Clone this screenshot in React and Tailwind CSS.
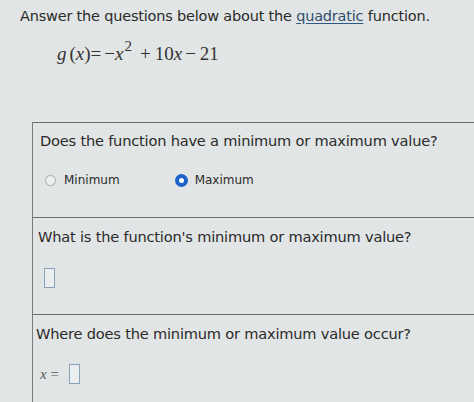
export default function App() {
  const sans = { fontFamily: '"DejaVu Sans", Verdana, sans-serif' };
  const serif = { fontFamily: '"Liberation Serif", "Times New Roman", serif' };
  return (
    <div className="w-[474px] h-[402px] overflow-hidden bg-[#e2e5e5] text-[#2a2a2a]" style={sans}>
      <div className="pt-[6px] pl-[20px] text-[14.5px] tracking-[-0.2px]">
        Answer the questions below about the <span className="underline decoration-[#2f5a85] underline-offset-2 text-[#2f4d6b]">quadratic</span> function.
      </div>
      <div className="pl-[57px] pt-[12px] text-[19px] text-[#333] flex items-baseline" style={serif}>
        <i>g</i>
        <span className="ml-[3px]">(</span><i>x</i><span>)</span>
        <span>=</span>
        <span className="ml-[3px]">−</span><i>x</i>
        <span className="relative -top-[9px] text-[15px] ml-[1px]">2</span>
        <span className="ml-[8px]">+</span>
        <span className="ml-[4px]">10</span><i>x</i>
        <span className="ml-[3px]">−</span>
        <span className="ml-[4px]">21</span>
      </div>
      <div className="ml-[32px] mt-[54px] border-l border-[#7a7c7c]">
        <div className="border-t border-[#6e7070] h-[95px] pl-[7px] pt-[7px]">
          <div className="text-[14.6px] tracking-[-0.2px]">Does the function have a minimum or maximum value?</div>
          <div className="flex items-center mt-[19px] text-[12px]">
            <div className="ml-[5px] w-[11px] h-[11px] rounded-full border border-[#a9abab] bg-[#eef0f0]" />
            <span className="ml-[8px]">Minimum</span>
            <div className="ml-[55px] w-[13px] h-[13px] rounded-full bg-[#1c62c9] flex items-center justify-center">
              <div className="w-[5px] h-[5px] rounded-full bg-white" />
            </div>
            <span className="ml-[7px]">Maximum</span>
          </div>
        </div>
        <div className="border-t border-[#6e7070] h-[97px] pl-[5px] pt-[8px]">
          <div className="text-[14.6px] tracking-[-0.2px]">What is the function's minimum or maximum value?</div>
          <div className="ml-[6px] mt-[20px] w-[11px] h-[20px] border border-[#8aa2b8] bg-[#eaeeee]" />
        </div>
        <div className="border-t border-[#6e7070] h-[100px] pl-[3px] pt-[8px]">
          <div className="text-[14.6px] tracking-[-0.2px]">Where does the minimum or maximum value occur?</div>
          <div className="flex items-center mt-[18px] ml-[4px]">
            <span className="text-[15px] text-[#555]" style={serif}><i>x</i>&nbsp;=</span>
            <div className="ml-[10px] w-[11px] h-[20px] border border-[#8aa2b8] bg-[#eaeeee]" />
          </div>
        </div>
      </div>
    </div>
  );
}
